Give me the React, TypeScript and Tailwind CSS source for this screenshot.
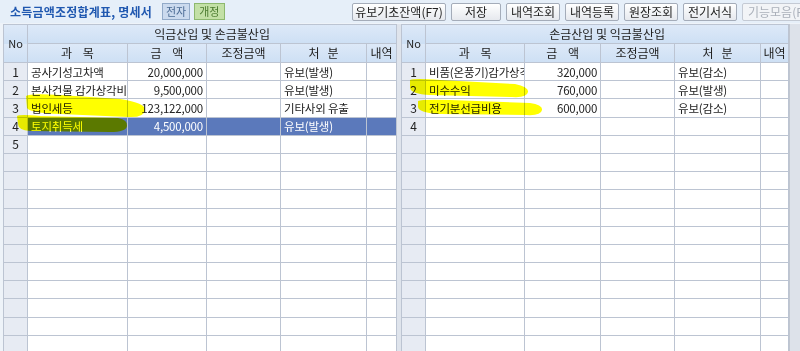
import React from "react";

type Row = { no: number; name?: string; amount?: string; adj?: string; disp?: string; note?: string };

const leftRows: Row[] = [
  { no: 1, name: "공사기성고차액", amount: "20,000,000", disp: "유보(발생)" },
  { no: 2, name: "본사건물 감가상각비", amount: "9,500,000", disp: "유보(발생)" },
  { no: 3, name: "법인세등", amount: "123,122,000", disp: "기타사외 유출" },
  { no: 4, name: "토지취득세", amount: "4,500,000", disp: "유보(발생)" },
  { no: 5 },
];

const rightRows: Row[] = [
  { no: 1, name: "비품(온풍기)감가상각비", amount: "320,000", disp: "유보(감소)" },
  { no: 2, name: "미수수익", amount: "760,000", disp: "유보(발생)" },
  { no: 3, name: "전기분선급비용", amount: "600,000", disp: "유보(감소)" },
  { no: 4 },
];

const buttons = [
  { label: "유보기초잔액(F7)", w: "w-[94px]" },
  { label: "저장", w: "w-[50px]" },
  { label: "내역조회", w: "w-[54px]" },
  { label: "내역등록", w: "w-[54px]" },
  { label: "원장조회", w: "w-[54px]" },
  { label: "전기서식", w: "w-[54px]" },
];

function Grid({ title, cols, rows, selected }: { title: string; cols: number[]; rows: Row[]; selected?: number }) {
  const total = 16;
  const all: Row[] = Array.from({ length: total }, (_, i) => rows[i] ?? { no: 0 });
  const line = "border border-[#bcc4d2]";
  return (
    <table className="table-fixed border-collapse text-[12px] text-[#222]" style={{ width: cols.reduce((a, b) => a + b, 0) }}>
      <colgroup>
        {cols.map((w, i) => (
          <col key={i} style={{ width: w }} />
        ))}
      </colgroup>
      <thead>
        <tr className="h-[18px] bg-gradient-to-b from-[#dde9f8] to-[#cddff4]">
          <th rowSpan={2} className={`${line} font-normal text-[11px]`}>No</th>
          <th colSpan={5} className={`${line} font-normal`}>{title}</th>
        </tr>
        <tr className="h-[18px] bg-gradient-to-b from-[#dde9f8] to-[#cddff4]">
          <th className={`${line} font-normal`}>과&nbsp;&nbsp;&nbsp;&nbsp;목</th>
          <th className={`${line} font-normal`}>금&nbsp;&nbsp;&nbsp;&nbsp;액</th>
          <th className={`${line} font-normal`}>조정금액</th>
          <th className={`${line} font-normal`}>처&nbsp;&nbsp;&nbsp;분</th>
          <th className={`${line} font-normal`}>내역</th>
        </tr>
      </thead>
      <tbody>
        {all.map((r, i) => {
          const sel = r.no === selected;
          const cell = `${line} px-[3px] whitespace-nowrap overflow-hidden text-[11.5px] tracking-[-0.2px] ${sel ? "bg-[#5b79bb] text-white" : "bg-white"}`;
          return (
            <tr key={i} className="h-[18px] leading-[16px]">
              <td className={`${line} bg-[#e7ebf3] text-center`}>{r.no || ""}</td>
              <td className={cell}>{r.name}</td>
              <td className={`${cell} text-right`}>{r.amount}</td>
              <td className={`${cell} text-right`}>{r.adj}</td>
              <td className={cell}>{r.disp}</td>
              <td className={cell}>{r.note}</td>
            </tr>
          );
        })}
      </tbody>
    </table>
  );
}

export default function App() {
  return (
    <div
      className="relative w-[800px] h-[351px] overflow-hidden bg-[#eef3f9]"
      style={{ fontFamily: '"Noto Sans CJK KR", "Noto Sans", sans-serif' }}
    >
      <div className="flex items-center h-[23px] pl-[10px] bg-[#e6eff9]">
        <span className="w-[148px] text-[12px] font-bold text-[#2058b0] tracking-[0.2px] whitespace-nowrap">소득금액조정합계표, 명세서</span>
        <span className="ml-[4px] px-[3px] h-[17px] leading-[15px] text-[11px] text-[#4b6b94] bg-[#cbdaee] border border-[#92aac8]">전자</span>
        <span className="ml-[4px] px-[4px] h-[17px] leading-[15px] text-[11px] text-[#4a7a2e] bg-[#c3e0a6] border border-[#8db86e]">개정</span>
        <div className="ml-auto flex gap-[5px] shrink-0 -mr-[4px]">
          {buttons.map((b) => (
            <button
              key={b.label}
              className={`${b.w} h-[18px] text-[12px] leading-[16px] text-[#222] bg-gradient-to-b from-[#ffffff] to-[#e6e9ee] border border-[#a4acb9] rounded-[2px] whitespace-nowrap`}
            >
              {b.label}
            </button>
          ))}
          <button className="h-[18px] pl-[5px] w-[62px] text-left text-[12px] leading-[16px] text-[#aab0ba] bg-[#f2f4f7] border border-[#c4cad4] rounded-[2px] whitespace-nowrap overflow-hidden">
            기능모음(F8)
          </button>
        </div>
      </div>
      <div className="flex pl-[3px] pt-[1px]">
        <Grid title="익금산입 및 손금불산입" cols={[24, 100, 79, 74, 86, 30]} rows={leftRows} selected={4} />
        <div className="w-[6px] flex justify-center">
          <div className="w-[4px] h-[330px] bg-[#dfe4ec]" />
        </div>
        <div className="flex">
          <Grid title="손금산입 및 익금불산입" cols={[24, 99, 76, 74, 86, 28]} rows={rightRows} />
          <div className="w-[11px] h-[330px] bg-[#dde2ea] border-l border-[#c0c6d0]" />
        </div>
      </div>
      <svg className="absolute inset-0 pointer-events-none mix-blend-multiply" width="800" height="351">
        <path d="M26 96 Q30 93 60 95 L120 99 Q146 103 145 110 Q144 118 128 117 L60 114 Q30 113 27 108 Z" fill="#ffff00" />
        <path d="M17 116 Q20 114 40 116 L118 118 Q128 120 127 126 Q126 132 110 132 L30 131 Q18 130 18 124 Z" fill="#ffff00" />
        <path d="M410 80 Q414 78 440 80 L515 84 Q529 87 528 92 Q527 98 512 97 L430 95 Q411 94 410 88 Z" fill="#ffff00" />
        <path d="M418 101 Q422 99 450 100 L530 103 Q543 105 542 110 Q541 116 526 115 L440 114 Q419 113 418 107 Z" fill="#ffff00" />
      </svg>
    </div>
  );
}
